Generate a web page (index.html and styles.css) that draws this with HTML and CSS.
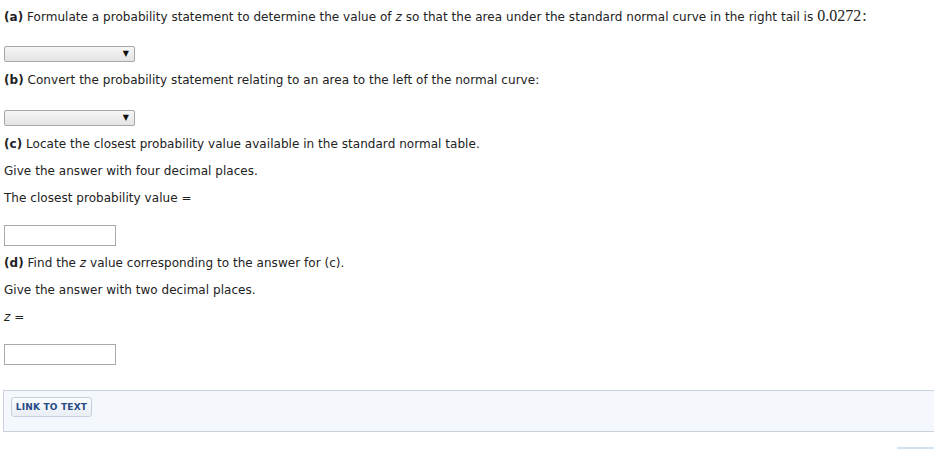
FILE: index.html
```html
<!DOCTYPE html>
<html>
<head>
<meta charset="utf-8">
<link rel="stylesheet" href="styles.css">
</head>
<body>
<div class="page">
  <p class="line first"><b>(a)</b> Formulate a probability statement to determine the value of <i>z</i> so that the area under the standard normal curve in the right tail is <span class="math">0.0272</span><span class="math colon">:</span></p>
  <div class="select"><span class="arrow">▼</span></div>
  <p class="line after-ctl"><b>(b)</b> Convert the probability statement relating to an area to the left of the normal curve:</p>
  <div class="select"><span class="arrow">▼</span></div>
  <p class="line after-ctl"><b>(c)</b> Locate the closest probability value available in the standard normal table.</p>
  <p class="line">Give the answer with four decimal places.</p>
  <p class="line">The closest probability value =</p>
  <div class="input"></div>
  <p class="line after-ctl"><b>(d)</b> Find the <i>z</i> value corresponding to the answer for (c).</p>
  <p class="line">Give the answer with two decimal places.</p>
  <p class="line"><i>z</i> =</p>
  <div class="input"></div>
  <div class="footer">
    <span class="link-btn">LINK TO TEXT</span>
  </div>
  <div class="tail-wrap"><div class="tail"></div></div>
</div>
</body>
</html>
```

FILE: styles.css
```css
html, body {
  margin: 0;
  padding: 0;
  background: #ffffff;
}
body {
  font-family: "DejaVu Sans", Verdana, sans-serif;
  font-size: 12px;
  letter-spacing: 0.04px;
  color: #222222;
}
.page {
  padding: 8px 0 0 4px;
}
.line {
  margin: 0;
  height: 16px;
  line-height: 16px;
  white-space: nowrap;
}
.line + .line {
  margin-top: 11px;
}
.line b {
  font-weight: bold;
}
.math {
  font-family: "Liberation Serif", "Times New Roman", serif;
  font-size: 16px;
  letter-spacing: 0;
  color: #222;
}
.colon {
  margin-left: 1px;
}
.select {
  box-sizing: border-box;
  width: 131px;
  height: 16px;
  margin-top: 22px;
  border: 1px solid #a6a6a6;
  border-radius: 2px;
  background: linear-gradient(#f6f6f6, #e4e4e4);
  display: flex;
  justify-content: flex-end;
  align-items: center;
  padding-right: 5px;
}
.arrow {
  font-size: 8px;
  line-height: 8px;
  color: #111;
}
.select + .after-ctl {
  margin-top: 10px;
}
.input + .after-ctl {
  margin-top: 9px;
}
.input {
  box-sizing: border-box;
  width: 112px;
  height: 21px;
  margin-top: 19px;
  border: 1px solid #a9a9a9;
  background: #fff;
}
.footer {
  box-sizing: border-box;
  margin-top: 25px;
  margin-left: -1px;
  height: 42px;
  border: 1px solid #c9d1dd;
  border-right: none;
  background: #f4f7fb;
  padding: 6px 0 0 7px;
}
.link-btn {
  display: inline-block;
  box-sizing: border-box;
  height: 20px;
  width: 81px;
  line-height: 18px;
  text-align: center;
  border: 1px solid #c7d1de;
  border-radius: 3px;
  background: linear-gradient(#fbfcfe, #e9eef5);
  color: #274b86;
  font-weight: bold;
  font-size: 9px;
  letter-spacing: 0.2px;
}
.tail-wrap {
  display: flex;
  justify-content: flex-end;
  margin-top: 15px;
}
.tail {
  width: 37px;
  height: 2px;
  background: #d4e1ee;
}
```
